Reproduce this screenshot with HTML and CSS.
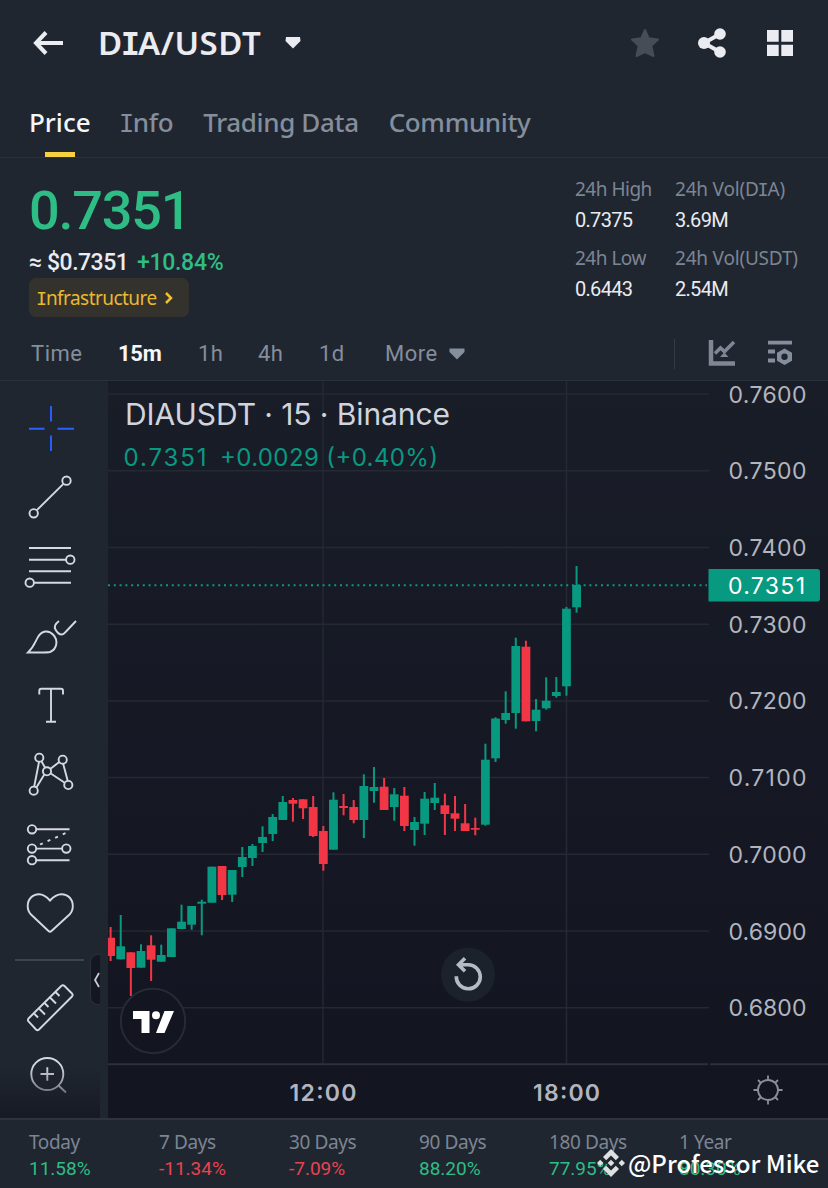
FILE: index.html
```html
<!DOCTYPE html>
<html lang="en">
<head>
  <meta charset="UTF-8">
  <meta name="viewport" content="width=device-width, initial-scale=1.0">
  <title>DIA/USDT</title>
  <link rel="stylesheet" href="styles.css">
</head>
<body>
  <div class="page">
    <div class="header">
      <svg class="back" width="32" height="28" viewBox="0 0 32 28"><path d="M13 3.500 3 14 13 24.500M3 14H30" fill="none" stroke="#eaecf2" stroke-width="4"/></svg>
      <h1 class="pair">D<span class="slab">I</span>A/USDT</h1>
      <svg class="caret" width="16" height="12" viewBox="0 0 16 12"><path d="M1 0H15L15.500 4 8 11.500.500 4Z" fill="#eaecf2"/></svg>
      <div class="header-icons">
        <svg width="30" height="30" viewBox="0 0 30 30"><path d="M16 2 19.800 10.300 29 11.500 22.300 17.800 24.500 28 16 24 7.500 28 9.700 17.800 3 11.500 12.200 10.300Z" fill="#474d57" stroke="#474d57" stroke-width="2" stroke-linejoin="round"/></svg>
        <svg width="30" height="30" viewBox="0 0 30 30"><g fill="#eaecf2"><circle cx="7" cy="15" r="6"/><circle cx="23" cy="6" r="5.800"/><circle cx="23" cy="24" r="5.800"/></g><path d="M23 6 7 15 23 24" fill="none" stroke="#eaecf2" stroke-width="4"/></svg>
        <svg width="30" height="30" viewBox="0 0 30 30"><path d="M2 2H13.700V13.700H2ZM16.300 2H28V13.700H16.300ZM2 16.700H13.700V28H2ZM16.300 16.700H28V28H16.300Z" fill="#eaecf2"/></svg>
      </div>
    </div>

    <div class="tabs">
      <a class="tab active">Price</a>
      <a class="tab"><span class="slab">I</span>nfo</a>
      <a class="tab">Trading Data</a>
      <a class="tab">Community</a>
    </div>

    <div class="summary">
      <div class="quote">
        <div class="last">0.7351</div>
        <div class="fiat"><span class="approx">≈</span><span class="usd">$0.7351</span><span class="change">+10.84%</span></div>
        <a class="tag"><span><span class="slab">I</span>nfrastructure</span><svg width="8" height="12" viewBox="0 0 8 12"><path d="M1 1 6 6 1 11" fill="none" stroke="#f0c12f" stroke-width="2.500"/></svg></a>
      </div>
      <div class="stats">
        <div class="stat"><p>24h High</p><b>0.7375</b></div>
        <div class="stat"><p>24h Vol(D<span class="slab">I</span>A)</p><b>3.69M</b></div>
        <div class="stat"><p>24h Low</p><b>0.6443</b></div>
        <div class="stat"><p>24h Vol(USDT)</p><b>2.54M</b></div>
      </div>
    </div>

    <div class="intervals">
      <span class="time">Time</span>
      <span class="m15">15m</span>
      <span class="h1">1h</span>
      <span class="h4">4h</span>
      <span class="d1">1d</span>
      <span class="more">More</span>
      <svg width="18" height="12" viewBox="0 0 18 12"><path d="M1.500.500H16.500V4L9 11.500 1.500 4Z" fill="#848e9c"/></svg>
      <div class="interval-icons">
        <svg width="28" height="28" viewBox="0 0 28 28"><path d="M3 0V23.500H27" fill="none" stroke="#7f8794" stroke-width="4.500"/><path d="M7 13.500 12.500 8 16.500 11.500 26 2" fill="none" stroke="#7f8794" stroke-width="3.500"/><path d="M13.500 10H19L16.800 13 20.500 17H12L15.700 13Z" fill="#7f8794"/></svg>
        <svg width="28" height="28" viewBox="0 0 28 28"><path d="M2 2.700H26M2 11.500H9M2 20.500H9" stroke="#848e9c" stroke-width="3.800"/><path d="M18.500 8.500 26 12.700V20.700L18.500 25 11 20.700V12.700ZM18.500 13.500A3.200 3.200 0 1 0 18.500 19.900 3.200 3.200 0 0 0 18.500 13.500Z" fill="#848e9c" fill-rule="evenodd"/></svg>
      </div>
    </div>

    <div class="workspace">
      <div class="tools">
        <svg class="tool cross" viewBox="0 0 108 69"><path d="M51 12V27.500M51 41.500V57M29 34.700H44.500M57.500 34.700H74"/></svg>
        <svg class="tool" viewBox="0 0 108 69"><path d="M36.800 47.200 63.400 20.800"/><circle cx="66.500" cy="17.700" r="4.200"/><circle cx="33.700" cy="50.300" r="4.200"/></svg>
        <svg class="tool" viewBox="0 0 108 69"><path d="M29 16H71M29 27.700H66M29 39.200H71M34 50.700H71"/><circle cx="70.300" cy="27.700" r="4.200"/><circle cx="29.700" cy="50.700" r="4.200"/></svg>
        <svg class="tool" viewBox="0 0 108 69"><path d="M28 51.500C34 46 35 41 38 36 42 29 49 29 53.500 34 58 39 57.500 48 50 51 48 51.700 45 51.500 28 51.500ZM59 20C55 23 54 26 55.500 28.500 57 31.500 60 33.500 62 33.500 64 33.500 65 31.500 66.500 30L76 20"/></svg>
        <svg class="tool" viewBox="0 0 108 69"><path d="M39.300 24.500V20.700Q39.300 18.700 41.300 18.700H61Q63 18.700 63 20.700V24.500M51 18.700V51.700M46 51.700H56"/></svg>
        <svg class="tool" viewBox="0 0 108 69"><path d="M39 23 34.200 47.500M41.500 22.300 45 28.500M44.300 35.500 36.400 48.400M50.500 29.800 59 23.200M50.800 34.500 64.700 43.700M63.200 25 67.700 41.800"/><circle cx="39.300" cy="18.700" r="4.100"/><circle cx="62.700" cy="20.700" r="4.100"/><circle cx="47" cy="32.300" r="4.100"/><circle cx="33.700" cy="51.700" r="4.100"/><circle cx="68.300" cy="46" r="4.100"/></svg>
        <svg class="tool" viewBox="0 0 108 69"><path d="M36.200 21.300H69.500M36.200 40.600H62M36.200 52.200H69.500"/><path d="M40 36.500 67 24.500" stroke-dasharray="3 5.300"/><circle cx="32" cy="21.300" r="4.200"/><circle cx="32" cy="40.600" r="4.200"/><circle cx="66.300" cy="40.600" r="4.200"/><circle cx="32" cy="52.200" r="4.200"/></svg>
        <svg class="tool" viewBox="0 0 108 69"><path d="M50 23.500C46 19 43 17.200 39 17.200 32.500 17.200 27.700 22 27.700 29 27.700 33 28.500 35 31 37.500L48.500 54Q50 55.500 51.500 54L69.500 37.500C72 35 72.800 33 72.800 29 72.800 22 68 17.200 61.500 17.200 57.500 17.200 54 19 50 23.500Z"/></svg>
        <div class="tools-line"></div>
        <svg class="tool" viewBox="0 0 108 69"><path d="M61.500 12.800Q63 11.500 64.500 13L72 20.500Q73.300 22 72 23.500L39 56.500Q37.500 57.800 36 56.500L28.500 48.500Q27.300 47 28.500 45.500ZM34.500 41 38 44.500M39.500 36 45 41.500M45 30.500 48.500 34M50.500 25 56 30.500M56 19.500 59.500 23"/></svg>
        <svg class="tool zoom" viewBox="0 0 108 69"><circle cx="47.300" cy="32" r="16"/><path d="M58.500 43.500 66 50.500M40.500 32H54M47.300 25.200V38.800"/></svg>
        <div class="tools-fade"></div>
        <div class="collapse"><svg width="7" height="16" viewBox="0 0 7 16"><path d="M6 1 2 8 6 15" fill="none" stroke="#c5c9d3" stroke-width="1.800"/></svg></div>
      </div>
      <svg class="chart" width="720" height="737" viewBox="108 381 720 737">
        <g id="grid"></g>
        <g id="candles"></g>
        <path class="last-line" d="M108 585.300H707"/>
        <g id="prices"></g>
        <path d="M708.500 569H817Q820 569 820 572V598.500Q820 601.500 817 601.500H708.500Z" fill="#089981"/>
        <text class="price-tag" x="728" y="593.500" textLength="77">0.7351</text>
        <path class="axis" d="M108 1064.300H708M710 1064.300H828"/>
        <text class="hour" x="289.500" y="1100.500" textLength="67">12:00</text>
        <text class="hour" x="533" y="1100.500" textLength="67">18:00</text>
        <text class="symbol" x="125" y="425" textLength="325">DIAUSDT · 15 · Binance</text>
        <text class="delta" x="123.500" y="466.300" textLength="83">0.7351</text>
        <text class="delta" x="220" y="466.300" textLength="218">+0.0029 (+0.40%)</text>
        <g class="sun"><circle cx="768" cy="1090" r="10"/><path d="M768 1080V1075.500M768 1100V1104.500M758 1090H753.500M778 1090H782.500M761 1083 758 1080M775 1083 778 1080M761 1097 758 1100M775 1097 778 1100"/></g>
        <circle cx="153" cy="1021" r="32.200" fill="#131521" stroke="#262b35" stroke-width="2"/>
        <path d="M133 1011H149.500V1033H141.500V1019H133ZM164.500 1011H174L164.500 1033H156Z" fill="#fff"/><circle cx="156" cy="1015.200" r="4" fill="#fff"/>
        <circle cx="468" cy="974.700" r="27" fill="#1c222c"/>
        <path d="M456.300 976.300A12 12 0 1 0 468 964.800H459M465 958.300 458.500 964.800 465 971.300" fill="none" stroke="#b6bac6" stroke-width="3.600"/>
      </svg>
    </div>

    <div class="periods">
      <div class="period up"><p>Today</p><b>11.58%</b></div>
      <div class="period down"><p>7 Days</p><b>-11.34%</b></div>
      <div class="period down"><p>30 Days</p><b>-7.09%</b></div>
      <div class="period up"><p>90 Days</p><b>88.20%</b></div>
      <div class="period up"><p>180 Days</p><b>77.95%</b></div>
      <div class="period up"><p>1 Year</p><b>80.30%</b></div>
      <div class="credit">
        <svg width="28" height="28" viewBox="0 0 28 28"><path d="M14 0 22 8 18.800 11.200 14 6.400 9.200 11.200 6 8ZM14 28 22 20 18.800 16.800 14 21.600 9.200 16.800 6 20ZM14 10.700 17.300 14 14 17.300 10.700 14ZM3.200 10.800 6.400 14 3.200 17.200 0 14ZM24.800 10.800 28 14 24.800 17.200 21.600 14Z" fill="#dfe0e2"/></svg>
        <span>@Professor Mike</span>
      </div>
    </div>
  </div>
  <script src="script.js"></script>
</body>
</html>
```
FILE: styles.css
```css
* {
  box-sizing: border-box;
}

body {
  margin: 0;
  background: #202630;
  color: #eaecf2;
  font-family: "Noto Sans", sans-serif;
}

h1, p {
  margin: 0;
}

b {
  font-weight: 400;
}

svg {
  display: block;
  flex: none;
}

/* capital I with serifs */
.slab {
  font-family: "DejaVu Sans Mono", monospace;
  font-size: 0.970em;
  line-height: 1;
  letter-spacing: -0.060em;
  margin-left: -0.060em;
}

.page {
  width: 828px;
  height: 1188px;
  overflow: hidden;
  display: flex;
  flex-direction: column;
}

.header {
  height: 86px;
  padding: 0 33px 1px;
  display: flex;
  align-items: center;
}

.pair {
  width: 185px;
  margin-left: 33px;
  font-size: 33px;
  line-height: 48px;
  font-weight: 600;
  letter-spacing: 0.5px;
  white-space: nowrap;
}

.caret {
  margin-left: 2px;
}

.header-icons {
  display: flex;
  gap: 38px;
  margin-left: auto;
}

.tabs {
  height: 72px;
  padding-left: 29px;
  display: flex;
  gap: 30px;
  border-bottom: 1px solid #2b313a;
}

.tab {
  height: 71px;
  position: relative;
  font-size: 26px;
  line-height: 73px;
  font-weight: 500;
  letter-spacing: -0.350px;
  color: #848e9c;
}

.tab.active {
  letter-spacing: 0;
  color: #f5f6fa;
}

.tab.active::after {
  content: "";
  position: absolute;
  left: 16px;
  bottom: 0;
  width: 30px;
  height: 5px;
  background: #f5d13f;
}

.summary {
  height: 169px;
  padding: 14px 0 0 29px;
  display: flex;
}

.quote {
  width: 546px;
}

.last {
  height: 77px;
  font: 500 54px/78px Roboto, sans-serif;
  letter-spacing: -1.200px;
  color: #2ebd85;
}

.fiat {
  height: 29px;
  display: flex;
  font: 500 23px/28px Roboto, sans-serif;
  letter-spacing: -0.500px;
}

.approx {
  width: 18px;
}

.usd {
  width: 90px;
}

.change {
  letter-spacing: -0.300px;
  color: #2ebd85;
}

.tag {
  width: 160px;
  height: 39px;
  padding-left: 8px;
  display: flex;
  align-items: center;
  gap: 8px;
  border-radius: 7px;
  background: #34322d;
  color: #e9b92e;
  font-size: 19px;
  letter-spacing: -0.550px;
}

.stats {
  display: grid;
  grid-template-columns: 100px 140px;
  grid-auto-rows: 69px;
  white-space: nowrap;
}

.stat p {
  font-size: 19px;
  line-height: 34px;
  letter-spacing: -0.500px;
  color: #7c8593;
}

.stat:nth-child(even) p {
  letter-spacing: -0.200px;
}

.stat b {
  display: block;
  font: 400 20px/28px Roboto, sans-serif;
  letter-spacing: -0.700px;
}

.intervals {
  height: 54px;
  padding: 1px 0 0 31px;
  display: flex;
  align-items: center;
  border-bottom: 1px solid #2b313a;
  font: 400 22px/54px Roboto, sans-serif;
  letter-spacing: 0.5px;
  color: #848e9c;
}

.time { width: 87px; }
.m15 { width: 80px; font-weight: 700; letter-spacing: -0.300px; color: #f5f6fa; }
.h1 { width: 60px; }
.h4 { width: 61px; }
.d1 { width: 66px; }
.more { width: 63px; }

.interval-icons {
  height: 30px;
  margin-left: auto;
  padding: 1px 34px 0 33px;
  display: flex;
  gap: 30px;
  border-left: 1px solid #353b45;
}

.workspace {
  height: 737px;
  display: flex;
}

.tools {
  width: 108px;
  height: 737px;
  padding-top: 13px;
  position: relative;
}

.tool {
  width: 108px;
  height: 69px;
  fill: none;
  stroke: #d5d8e0;
  stroke-width: 1.900;
}

.cross {
  stroke: #2962ff;
}

.tools-line {
  width: 69px;
  height: 2px;
  margin: 13px 0 12px 15px;
  background: #3e444f;
}

.tools-fade {
  position: absolute;
  left: 0;
  bottom: 0;
  width: 100px;
  height: 52px;
  background: linear-gradient(rgba(22, 25, 35, 0), #161a24);
}

.collapse {
  position: absolute;
  left: 90px;
  top: 573px;
  width: 10px;
  height: 51px;
  padding: 17px 0 0 2px;
  border: 1px solid #2a303a;
  border-right: 0;
  border-radius: 8px 0 0 8px;
  background: #141722;
}

.chart {
  background: linear-gradient(#191d28, #131521 93%);
  font-family: Inter, sans-serif;
}

.grid-line {
  stroke: #252933;
  stroke-width: 1.500;
}

.axis {
  stroke: #2b303a;
  stroke-width: 2;
}

.up-candle { fill: #089981; }
.down-candle { fill: #f23645; }

.last-line {
  stroke: #089981;
  stroke-width: 2;
  stroke-dasharray: 2 3.800;
}

.price, .price-tag {
  font-size: 23px;
  fill: #b2b5be;
}

.price-tag {
  fill: #fff;
}

.hour {
  font-size: 23px;
  font-weight: 600;
  fill: #b2b5be;
}

.symbol {
  font-size: 30px;
  fill: #d1d4dc;
}

.delta {
  font-size: 24px;
  fill: #089981;
}

.sun {
  fill: none;
  stroke: #8b8f99;
  stroke-width: 1.800;
}

.periods {
  height: 70px;
  padding: 8px 0 0 29px;
  position: relative;
  display: grid;
  grid-template-columns: repeat(6, 130px);
  border-top: 2px solid #2e343e;
  white-space: nowrap;
}

.period p {
  font-size: 19px;
  line-height: 28px;
  letter-spacing: -0.400px;
  color: #7c8593;
}

.period b {
  display: block;
  font: 400 19px/25px Roboto, sans-serif;
}

.up b { color: #2ebd85; }
.down b { color: #e8434f; }

.credit {
  position: absolute;
  left: 597px;
  top: 25px;
  display: flex;
  align-items: center;
  gap: 3px;
  font: 500 24px/36px "Noto Sans CJK SC", sans-serif;
  color: #fff;
}
```
FILE: script.js
```js
// high, body top, body bottom, low, up
const candles = [
  [927, 937.7, 956, 961, 0], [915, 946.3, 959.3, 959.3, 1], [952.3, 952.3, 968, 996, 0],
  [944.3, 951, 967.7, 967.7, 1], [935.3, 945.3, 959.7, 981, 0], [944.7, 955, 961.7, 961.7, 1],
  [928.3, 928.3, 957, 957, 1], [904.7, 921.7, 929, 929, 1], [906, 906, 924.7, 929.7, 1],
  [899.7, 901.7, 903.7, 935.3, 1], [866.7, 866.7, 902.7, 902.7, 1], [866, 866, 895, 900, 0],
  [870, 870, 894.7, 902, 1], [847, 857, 867, 877, 1], [844, 846, 858, 866, 1],
  [826.3, 837, 843, 852, 1], [814, 817, 834, 841, 1], [796, 802, 820, 820, 1],
  [798, 800, 803.7, 821.7, 0], [799.3, 799.3, 808.3, 819, 0], [796, 807, 836, 837, 0],
  [826, 831, 864, 870.7, 0], [792.3, 799.7, 849.7, 849.7, 1], [794, 806, 808, 815.3, 0],
  [800, 807, 820, 823.3, 0], [774.3, 786, 820, 838, 1], [767, 787, 791, 802.7, 1],
  [778, 786.7, 810, 810, 0], [788, 794.3, 807, 820.7, 1], [787, 795.7, 826, 831, 0],
  [817, 822, 830, 845.7, 1], [792, 798.7, 823.7, 835, 1], [783, 797.7, 803, 810, 1],
  [793.7, 805.3, 814, 835, 0], [796, 813.3, 818.7, 831, 0], [804, 823.3, 831, 831, 0],
  [817.7, 828, 829.7, 835.3, 0], [743.7, 759.7, 824.7, 825.7, 1], [717.3, 718.5, 758.3, 762, 1],
  [691.3, 713, 720, 723.7, 1], [637.7, 646, 713, 728.7, 1], [640.7, 646.7, 721.3, 721.3, 0],
  [699, 709.7, 721, 731.3, 1], [677.3, 700.7, 708.3, 709.7, 1], [677, 692, 696, 697.7, 1],
  [607, 608.7, 686.3, 695.7, 1], [566, 585, 607.3, 612.7, 1]
];

let grid = '<path class="grid-line" d="M323 381V1064M566.500 381V1064"/>';
let prices = '';
for (let i = 0; i < 9; i++) {
  const y = 394 + i * 76.72;
  grid += `<path class="grid-line" d="M108 ${y}H709"/>`;
  prices += `<text class="price" x="728.500" y="${y + 8.5}" textLength="78">${(0.76 - i * 0.01).toFixed(4)}</text>`;
}
document.getElementById('grid').innerHTML = grid;
document.getElementById('prices').innerHTML = prices;

document.getElementById('candles').innerHTML = candles.map(([high, top, bottom, low, up], i) => {
  const x = 110.6 + i * 10.13;
  return `<g class="${up ? 'up-candle' : 'down-candle'}">
    <rect x="${x - 1}" y="${high}" width="2" height="${low - high}"/>
    <rect x="${x - 4.4}" y="${top}" width="8.800" height="${bottom - top}"/>
  </g>`;
}).join('');
```
